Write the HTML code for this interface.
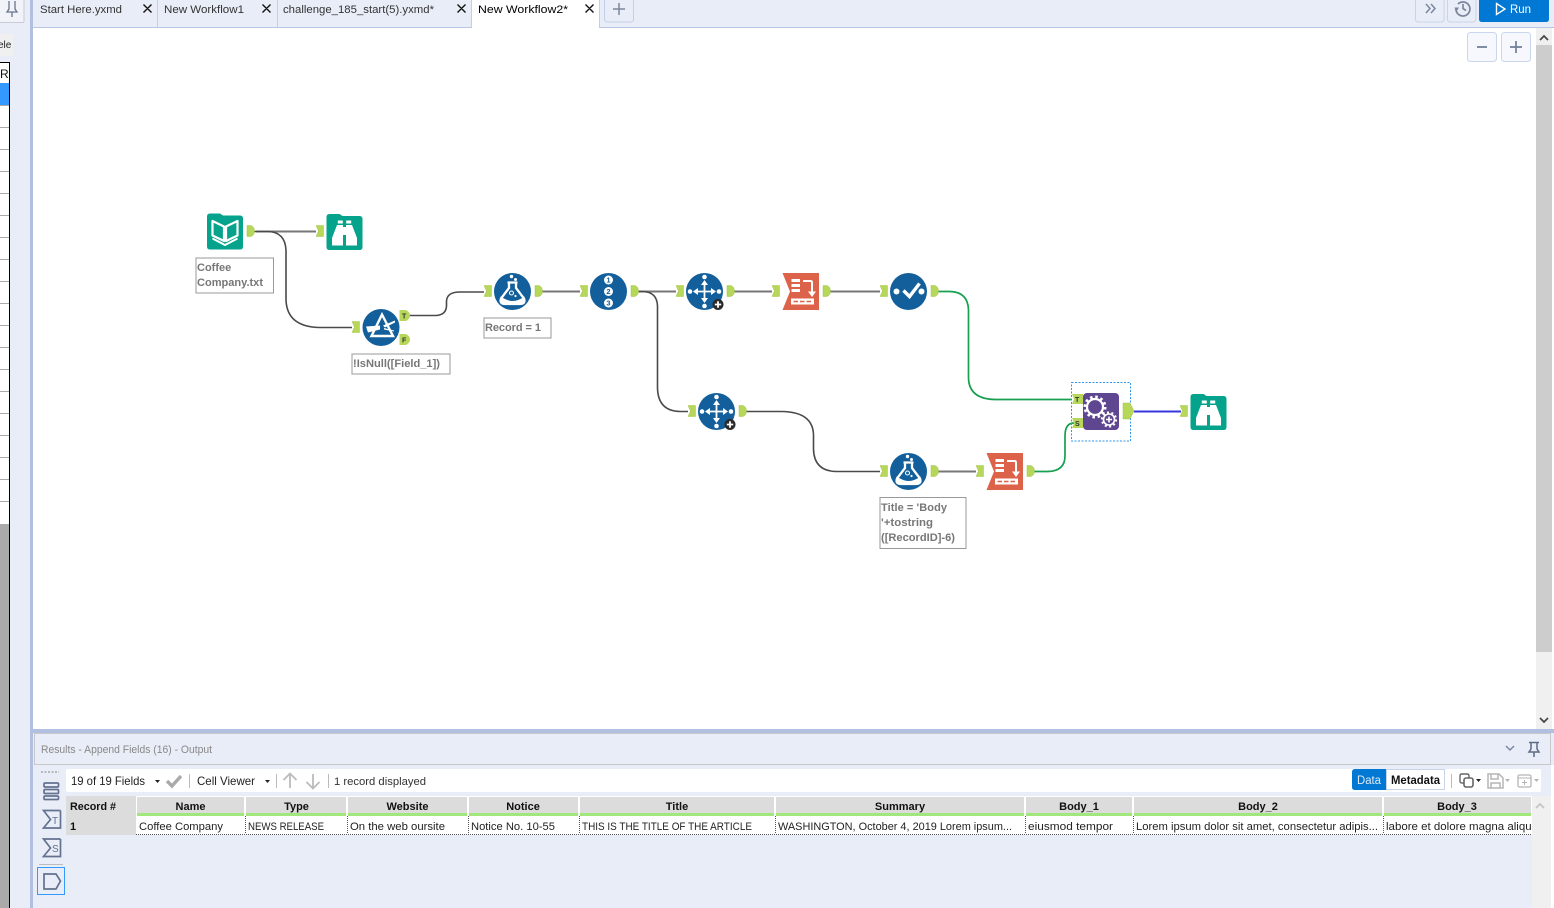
<!DOCTYPE html>
<html lang="en"><head><meta charset="utf-8"><title>Workflow</title>
<style>
html,body{margin:0;padding:0;background:#fff;overflow:hidden}
svg{display:block;font-family:"Liberation Sans",sans-serif}
.t{font-size:11px;fill:#333}
.h{font-size:11px;font-weight:bold;fill:#111;text-anchor:middle}
.c{font-size:11px;fill:#222}
.l{font-size:11px;font-weight:bold;fill:#777}
.s{stroke:#777;stroke-width:2;fill:none}
.w{stroke:#4a4a4a;stroke-width:1.6;fill:none}
.g{stroke:#17a050;stroke-width:1.7;fill:none}
</style></head><body>
<svg width="1554" height="908" viewBox="0 0 1554 908" xmlns="http://www.w3.org/2000/svg">
<defs>
<path id="o" d="M0-5.500H4Q7.500-4 7.500 0Q7.500 4 4 5.500H0Z" fill="#b7d75b" stroke="#a4c44c" stroke-width=".5"/>
<path id="i" d="M0-5.500H7.500V5.500H0L2.500 0Z" fill="#b7d75b" stroke="#a4c44c" stroke-width=".5"/>
<g id="browse">
<path d="M-18-15Q-18-18-15-18H-5L-2-16H15Q18-16 18-13V15Q18 18 15 18H-15Q-18 18-18 15Z" fill="#05a38b"/>
<path d="M-6.700-11.500H-1.700V-8.500H-6.700ZM6.700-11.500H1.700V-8.500H6.700Z" fill="#fff"/>
<path d="M-7.500-7H-1.500V-5H1.500V-7H7.500L12.500 6V13.500H1.500V3H-1.500V13.500H-12.500V6Z" fill="#fff"/>
</g>
<g id="flask">
<circle r="18.500" fill="#135f9b"/>
<circle cx="-1" cy="-15" r="1.700" fill="#fff"/><circle cx="3" cy="-12" r="1.500" fill="#fff"/>
<path d="M-5-9H5M-3.500-9V-3.500L-11.500 7Q-13.500 12.500-7 12.500H7Q13.500 12.500 11.500 7L3.500-3.500V-9" fill="none" stroke="#fff" stroke-width="2.300"/>
<path d="M-12 5Q-5 9.500 0 9.500Q6 9.500 12 5L12.500 10Q10 13.500 6 13.500H-6Q-10 13.500-12.500 10Z" fill="#fff"/>
<circle cx="-1" cy="1.500" r="2" fill="none" stroke="#fff" stroke-width="1.100"/><circle cx="3" cy="4.500" r="1.100" fill="#fff"/>
</g>
<g id="sel">
<circle r="18.500" fill="#135f9b"/>
<circle cy="-14.500" r="2.300" fill="#fff"/><circle cy="14.500" r="2.300" fill="#fff"/><circle cx="-14.500" r="2.300" fill="#fff"/><circle cx="14.500" r="2.300" fill="#fff"/>
<path d="M0-9.500V9.500M-9.500 0H9.500" stroke="#fff" stroke-width="1.800"/>
<path d="M0-11.500L-3.500-6.500H3.500ZM0 11.500L-3.500 6.500H3.500ZM-11.500 0L-6.500-3.500V3.500ZM11.500 0L6.500-3.500V3.500Z" fill="#fff"/>
<circle cx="13.500" cy="13" r="5.500" fill="#2a2a2a"/>
<path d="M13.500 9.800V16.200M10.300 13H16.700" stroke="#fff" stroke-width="1.800"/>
</g>
<g id="orange">
<path d="M-18.500-18.500H18V18.500H-18.500L-11 0Z" fill="#dc6349"/>
<path d="M-9.500-12.500H-1V-9.500H-9.500ZM-9.500-7.500H-1V-4.500H-9.500ZM-9.500-2.500H-1V.5H-9.500Z" fill="#fff"/>
<path d="M2-10.500H9.500Q11-10.500 11-9V1" fill="none" stroke="#fff" stroke-width="2"/>
<path d="M7 0H15L11 5.500Z" fill="#fff"/>
<rect x="-10" y="7" width="23" height="6" fill="#fff"/>
<path d="M-7.500 10H11" stroke="#dc6349" stroke-width="1.600" stroke-dasharray="4.500 2"/>
</g>
</defs>

<rect width="1554" height="908" fill="#e9edf8"/>

<!-- left panel -->
<rect x="0" y="524" width="9" height="384" fill="#aaa"/>
<rect x="0" y="0" width="24" height="22" fill="#f1f3f9"/>
<path d="M0 22.500H24M24 0V22" stroke="#c8ccd4"/>
<path d="M9 1V9L7 12H17L15 9V1M12 12V17" fill="none" stroke="#68738a" stroke-width="1.300"/>
<rect x="0" y="34" width="13" height="22" fill="#f0f0f0"/>
<text x="-2" y="48" font-size="10" fill="#222">ele</text>
<rect x="0" y="62" width="9" height="462" fill="#fff"/>
<rect x="0" y="83" width="9" height="22" fill="#3399ff"/>
<text x="0" y="78" font-size="12" fill="#111">R</text>
<path d="M0 105.500H9M0 127.500H9M0 149.500H9M0 171.500H9M0 193.500H9M0 215.500H9M0 237.500H9M0 259.500H9M0 281.500H9M0 303.500H9M0 325.500H9M0 347.500H9M0 369.500H9M0 391.500H9M0 413.500H9M0 435.500H9M0 457.500H9M0 479.500H9M0 501.500H9" stroke="#aaa"/>
<path d="M0 62.500H10M9.500 62V908" stroke="#000"/>
<rect x="30" y="0" width="3" height="908" fill="#b1c0e0"/>

<!-- tabs -->
<rect x="33" y="27" width="1521" height="1" fill="#b9c7e4"/>
<path d="M157.500 0V27M277.500 0V27M471.500 0V27M599.500 0V27" stroke="#c3cfe8"/>
<rect x="472" y="0" width="127" height="28" fill="#fff"/>
<text class="t" x="40" y="13" textLength="82" lengthAdjust="spacingAndGlyphs">Start Here.yxmd</text>
<text class="t" x="164" y="13" textLength="80" lengthAdjust="spacingAndGlyphs">New Workflow1</text>
<text class="t" x="283" y="13" textLength="151" lengthAdjust="spacingAndGlyphs">challenge_185_start(5).yxmd*</text>
<text class="t" x="478" y="13" textLength="90" lengthAdjust="spacingAndGlyphs" style="fill:#000">New Workflow2*</text>
<path d="M143.500 4.500L151.500 12.500M151.500 4.500L143.500 12.500M262.500 4.500L270.500 12.500M270.500 4.500L262.500 12.500M457.500 4.500L465.500 12.500M465.500 4.500L457.500 12.500M585.500 4.500L593.500 12.500M593.500 4.500L585.500 12.500" stroke="#111" stroke-width="1.400"/>
<path d="M604.500 0V19Q604.500 22 607.500 22H630.500Q633.500 22 633.500 19V0" fill="#e9edf8" stroke="#c3cfe8"/>
<path d="M619 3V15M613 9H625" stroke="#7b869c" stroke-width="1.500"/>

<!-- top right -->
<path d="M1415.500 0V19Q1415.500 22 1418.500 22H1441Q1444 22 1444 19V0M1447.500 0V19Q1447.500 22 1450.500 22H1473Q1476 22 1476 19V0" fill="#e9edf8" stroke="#c9d3e8"/>
<path d="M1426 4L1430 8.500L1426 13M1431 4L1435 8.500L1431 13" fill="none" stroke="#7b869c" stroke-width="1.500"/>
<path d="M1458 4A7 7 0 1 1 1456 10M1463 4V8.500L1466 10.500" fill="none" stroke="#7b869c" stroke-width="1.700"/>
<path d="M1454.500 7.500H1459L1456 12.500Z" fill="#7b869c"/>
<path d="M1479 0H1549V19Q1549 22 1546 22H1482Q1479 22 1479 19Z" fill="#0078d4"/>
<path d="M1496.500 3.500L1505 9L1496.500 14.500Z" fill="none" stroke="#fff" stroke-width="1.400"/>
<text x="1510" y="13" font-size="12" fill="#fff" textLength="21" lengthAdjust="spacingAndGlyphs">Run</text>

<!-- canvas -->
<rect x="33" y="28" width="1503" height="701" fill="#fff"/>
<rect x="1536" y="28" width="16" height="701" fill="#f0f0f0"/>
<rect x="1536" y="45" width="16" height="607" fill="#cdcdcd"/>
<rect x="1552" y="28" width="2" height="701" fill="#fff"/>
<path d="M1540 40L1544 36L1548 40M1540 718L1544 722L1548 718" fill="none" stroke="#444" stroke-width="1.700"/>
<rect x="1467.500" y="32.500" width="29" height="29" rx="3" fill="#f6f8fd" stroke="#c9d6ee"/>
<rect x="1501.500" y="32.500" width="29" height="29" rx="3" fill="#f6f8fd" stroke="#c9d6ee"/>
<path d="M1477 47H1487M1510 47H1522M1516 41V53" stroke="#6f7d96" stroke-width="1.700"/>

<!-- connectors -->
<path class="s" d="M256 231.500H316"/>
<path class="w" d="M254 231.500H268Q285 232 286 250V300Q287 327 320 327.500H352"/>
<path class="w" d="M409 315.500H436Q446 315 446.500 306V301Q447 292 460 292H484"/>
<path class="s" d="M542 291.500H580M638 291.500H676M734 291.500H772M830 291.500H880M938 471.500H976"/>
<path class="w" d="M638 291.500H643Q657 292 657.500 306V388Q658 411 680 411.500H688"/>
<path class="w" d="M746 411.500H782Q813 412 813.500 435V449Q814 471 836 471.500H880"/>
<path class="g" d="M938 291.500H950Q968 292 968.500 310V378Q969 399 995 399.500H1072"/>
<path class="g" d="M1034 471.500H1048Q1065 471 1065 456V436Q1065 423 1074 423"/>
<path d="M1134 411.500H1181" stroke="#3535dd" stroke-width="2" fill="none"/>

<!-- selection -->
<rect x="1071.500" y="382.500" width="59" height="58.500" fill="none" stroke="#2f96ee" stroke-dasharray="2 1.500"/>

<!-- anchors -->
<use href="#o" x="247" y="231"/><use href="#i" x="316" y="231"/>
<use href="#i" x="352" y="327"/>
<use href="#i" x="484" y="291"/><use href="#o" x="535" y="291"/>
<use href="#i" x="580" y="291"/><use href="#o" x="631" y="291"/>
<use href="#i" x="676" y="291"/><use href="#o" x="727" y="291"/>
<use href="#i" x="772" y="291"/><use href="#o" x="823" y="291"/>
<use href="#i" x="880" y="291"/><use href="#o" x="931" y="291"/>
<use href="#i" x="688" y="411"/><use href="#o" x="739" y="411"/>
<use href="#i" x="880" y="471"/><use href="#o" x="931" y="471"/>
<use href="#i" x="976" y="471"/><use href="#o" x="1027" y="471"/>
<use href="#i" x="1180" y="411"/>
<path d="M399.500 310H406Q410 312 410 315.500Q410 319 406 321H399.500Z" fill="#b7d75b"/>
<path d="M399.500 334H406Q410 336 410 339.500Q410 343 406 345H399.500Z" fill="#b7d75b"/>
<text x="402" y="318.500" font-size="7" font-weight="bold" fill="#333">T</text>
<text x="402" y="342.500" font-size="7" font-weight="bold" fill="#333">F</text>
<path d="M1072 394H1083V404H1072L1074 399Z" fill="#b7d75b"/>
<path d="M1072 418H1083V428H1072L1074 423Z" fill="#b7d75b"/>
<text x="1075" y="402" font-size="7" font-weight="bold" fill="#333">T</text>
<text x="1075" y="426" font-size="7" font-weight="bold" fill="#333">S</text>
<path d="M1123 403H1130L1134 411L1130 419H1123Z" fill="#b7d75b" stroke="#a4c44c" stroke-width=".5"/>

<!-- input tool -->
<g transform="translate(225 231.500)">
<path d="M-18-15Q-18-18-15-18H-5L-2-16H15Q18-16 18-13V15Q18 18 15 18H-15Q-18 18-18 15Z" fill="#05a38b"/>
<path d="M-1-5L-12.500-10.500V4L-1 9.500ZM1-5L12.500-10.500V4L1 9.500Z" fill="#05a38b" stroke="#fff" stroke-width="2.200" stroke-linejoin="round"/>
<path d="M-12.500 7L0 13.500L12.500 7" fill="none" stroke="#fff" stroke-width="2"/>
</g>
<use href="#browse" x="344.500" y="232"/>
<use href="#browse" x="1208.500" y="412"/>

<!-- filter -->
<g transform="translate(381 327.500)">
<circle r="18.500" fill="#135f9b"/>
<path d="M1-13L-9.500 8.500H12Z" fill="none" stroke="#fff" stroke-width="2.400"/>
<path d="M-15-1L-1-2V2L-13 5Z" fill="#fff"/>
<path d="M2-2L14-7V-5L4 0ZM3 0.500L13 3V4L3 2Z" fill="#fff"/>
</g>

<use href="#flask" x="512.500" y="291.500"/>
<use href="#flask" x="908.500" y="471.500"/>

<!-- record id -->
<g transform="translate(608.500 291.500)">
<circle r="18.500" fill="#135f9b"/>
<circle cy="-11.500" r="4.500" fill="#fff"/><circle r="4.500" fill="#fff"/><circle cy="11.500" r="4.500" fill="#fff"/>
<g font-size="7.500" font-weight="bold" fill="#135f9b" text-anchor="middle">
<text y="-8.800">1</text><text y="2.700">2</text><text y="14.200">3</text></g>
</g>

<use href="#sel" x="704.500" y="291.500"/>
<use href="#sel" x="716.500" y="411.500"/>
<use href="#orange" x="801" y="291.500"/>
<use href="#orange" x="1005" y="471.500"/>

<!-- check -->
<g transform="translate(908.500 291.500)">
<circle r="18.500" fill="#135f9b"/>
<circle cx="-12" cy="0" r="3" fill="#fff"/><circle cx="13" cy="0" r="3" fill="#fff"/>
<path d="M-5-1L1 5L11-8" fill="none" stroke="#fff" stroke-width="3.400"/>
</g>

<!-- purple -->
<g transform="translate(1101 411.500)">
<rect x="-18" y="-18.500" width="36" height="37" rx="4" fill="#5f4690"/>
<circle cx="-6" cy="-4.500" r="8" fill="none" stroke="#fff" stroke-width="2.200"/>
<circle cx="-6" cy="-4.500" r="10" fill="none" stroke="#fff" stroke-width="3" stroke-dasharray="2.500 2.730"/>
<circle cx="8" cy="8" r="5.500" fill="#5f4690" stroke="#fff" stroke-width="1.600"/>
<circle cx="8" cy="8" r="7" fill="none" stroke="#fff" stroke-width="2.200" stroke-dasharray="2 2.400"/>
<path d="M8 5V11M5 8H11" stroke="#fff" stroke-width="1.600"/>
</g>

<!-- annotations -->
<g fill="#fff" stroke="#999">
<rect x="196" y="258" width="77.500" height="35"/>
<rect x="484" y="318" width="67" height="20"/>
<rect x="352" y="354" width="98" height="20"/>
<rect x="880" y="497.500" width="86" height="51"/>
</g>
<text class="l" x="197" y="271">Coffee</text>
<text class="l" x="197" y="286" textLength="66" lengthAdjust="spacingAndGlyphs">Company.txt</text>
<text class="l" x="485" y="331" textLength="56" lengthAdjust="spacing">Record = 1</text>
<text class="l" x="353" y="367" textLength="87" lengthAdjust="spacingAndGlyphs">!IsNull([Field_1])</text>
<text class="l" x="881" y="511" textLength="66" lengthAdjust="spacing">Title = 'Body</text>
<text class="l" x="881" y="526" textLength="52" lengthAdjust="spacingAndGlyphs">'+tostring</text>
<text class="l" x="881" y="541" textLength="74" lengthAdjust="spacingAndGlyphs">([RecordID]-6)</text>

<!-- results panel -->
<rect x="33" y="729" width="1521" height="4" fill="#b1c0e0"/>
<rect x="34.500" y="733.500" width="1516" height="31" fill="#e9edf8" stroke="#c8c8cc"/>
<text x="41" y="753" font-size="11" fill="#888" textLength="171" lengthAdjust="spacingAndGlyphs">Results - Append Fields (16) - Output</text>
<path d="M1506 746L1510 750L1514 746" fill="none" stroke="#7a88a6" stroke-width="1.500"/>
<path d="M1529 742.500H1539M1531 742.500V749L1529 752H1539L1537 749V742.500M1534 752V757" fill="none" stroke="#5d6b85" stroke-width="1.500"/>

<!-- toolbar -->
<rect x="66" y="769" width="1475" height="23" rx="2" fill="#fff"/>
<text x="71" y="785" font-size="12" fill="#222" textLength="74" lengthAdjust="spacingAndGlyphs">19 of 19 Fields</text>
<path d="M155 780H160L157.500 783Z" fill="#222"/>
<path d="M167 781L172 786L181 776" fill="none" stroke="#aaa" stroke-width="3.400"/>
<path d="M189.500 774V788M276.500 774V788M328.500 774V788" stroke="#bbb"/>
<text x="197" y="785" font-size="12" fill="#222" textLength="58" lengthAdjust="spacingAndGlyphs">Cell Viewer</text>
<path d="M265 780H270L267.500 783Z" fill="#222"/>
<path d="M290 788V774M283.500 780L290 773.500L296.500 780M313 774V788M306.500 782L313 788.500L319.500 782" fill="none" stroke="#bbb" stroke-width="1.800"/>
<text x="334" y="785" font-size="11" fill="#333" textLength="92" lengthAdjust="spacingAndGlyphs">1 record displayed</text>
<path d="M1355 769H1386V790H1355Q1352 790 1352 787V772Q1352 769 1355 769Z" fill="#0078d4"/>
<text x="1357" y="784" font-size="11.500" fill="#dfeaf6" textLength="24" lengthAdjust="spacingAndGlyphs">Data</text>
<rect x="1386.500" y="769.500" width="58" height="20" fill="#fff" stroke="#c8d4e8"/>
<text x="1391" y="784" font-size="11.500" font-weight="bold" fill="#111" textLength="49" lengthAdjust="spacingAndGlyphs">Metadata</text>
<path d="M1451.500 774V788" stroke="#bbb"/>
<rect x="1464" y="778" width="9" height="9" rx="2" fill="none" stroke="#666" stroke-width="1.600"/>
<path d="M1464 783H1462Q1460 783 1460 781V776Q1460 774 1462 774H1467Q1469 774 1469 776V778" fill="none" stroke="#666" stroke-width="1.400"/>
<path d="M1476 779H1481L1478.500 782Z" fill="#222"/>
<path d="M1488 774H1499L1503 778V788H1488ZM1491 774V779H1498V774M1491 788V783H1500V788" fill="none" stroke="#b5b5b5" stroke-width="1.500"/>
<path d="M1505 779H1510L1507.500 782Z" fill="#b5b5b5"/>
<rect x="1518" y="775" width="13" height="12" rx="1.500" fill="none" stroke="#b5b5b5" stroke-width="1.300"/>
<path d="M1518 778H1531M1524.500 780V785M1522 782.500H1527" stroke="#b5b5b5"/>
<path d="M1534 779H1539L1536.500 782Z" fill="#b5b5b5"/>

<!-- gutter -->
<path d="M41 772H59" stroke="#999" stroke-dasharray="2 1.500" stroke-width="1.300"/>
<g fill="none" stroke="#63728f" stroke-width="1.700">
<rect x="44" y="783" width="14.500" height="4" rx="1"/><rect x="44" y="789.500" width="14.500" height="4" rx="1"/><rect x="44" y="796" width="14.500" height="3.500" rx="1"/>
<path d="M60.500 810.500H43.500L50.500 819.500L43.500 828H60.500V810.500"/>
<path d="M60.500 839H43.500L50.500 848L43.500 856.500H60.500V839"/>
<path d="M44 874H56L60.500 881L56 889H44Z"/>
</g>
<text x="52" y="824" font-size="10" fill="#63728f">T</text>
<text x="52" y="852" font-size="10" fill="#63728f">S</text>
<path d="M39 864.500H63" stroke="#bbb"/>
<rect x="37.500" y="867.500" width="27" height="27" fill="none" stroke="#3399ff"/>

<!-- table -->
<rect x="66" y="796" width="70" height="39" fill="#dcdcdc"/>
<text x="70" y="810" font-size="11" font-weight="bold" fill="#111" textLength="46" lengthAdjust="spacingAndGlyphs">Record #</text>
<text x="70" y="830" font-size="11" font-weight="bold" fill="#111">1</text>
<rect x="136" y="796" width="1396" height="39" fill="#fff"/>
<g fill="#dcdcdc">
<rect x="137" y="797" width="107" height="16"/><rect x="246" y="797" width="100" height="16"/><rect x="348" y="797" width="119" height="16"/><rect x="469" y="797" width="109" height="16"/><rect x="580" y="797" width="194" height="16"/><rect x="776" y="797" width="248" height="16"/><rect x="1026" y="797" width="106" height="16"/><rect x="1134" y="797" width="248" height="16"/><rect x="1384" y="797" width="147" height="16"/>
</g>
<g fill="#a2e77c">
<rect x="137" y="813" width="107" height="3"/><rect x="246" y="813" width="100" height="3"/><rect x="348" y="813" width="119" height="3"/><rect x="469" y="813" width="109" height="3"/><rect x="580" y="813" width="194" height="3"/><rect x="776" y="813" width="248" height="3"/><rect x="1026" y="813" width="106" height="3"/><rect x="1134" y="813" width="248" height="3"/><rect x="1384" y="813" width="147" height="3"/>
</g>
<text class="h" x="190.500" y="810">Name</text>
<text class="h" x="296.500" y="810">Type</text>
<text class="h" x="407.500" y="810">Website</text>
<text class="h" x="523" y="810">Notice</text>
<text class="h" x="677" y="810">Title</text>
<text class="h" x="900" y="810">Summary</text>
<text class="h" x="1079" y="810">Body_1</text>
<text class="h" x="1258" y="810">Body_2</text>
<text class="h" x="1457" y="810">Body_3</text>
<text class="c" x="139" y="830" textLength="84" lengthAdjust="spacingAndGlyphs">Coffee Company</text>
<text class="c" x="248" y="830" textLength="76" lengthAdjust="spacingAndGlyphs">NEWS RELEASE</text>
<text class="c" x="350" y="830" textLength="95" lengthAdjust="spacingAndGlyphs">On the web oursite</text>
<text class="c" x="471" y="830" textLength="84" lengthAdjust="spacingAndGlyphs">Notice No. 10-55</text>
<text class="c" x="582" y="830" textLength="170" lengthAdjust="spacingAndGlyphs">THIS IS THE TITLE OF THE ARTICLE</text>
<text class="c" x="778" y="830" textLength="234" lengthAdjust="spacingAndGlyphs">WASHINGTON, October 4, 2019 Lorem ipsum...</text>
<text class="c" x="1028" y="830" textLength="85" lengthAdjust="spacingAndGlyphs">eiusmod tempor</text>
<text class="c" x="1136" y="830" textLength="242" lengthAdjust="spacingAndGlyphs">Lorem ipsum dolor sit amet, consectetur adipis...</text>
<svg x="1384" y="816" width="147" height="18"><text class="c" x="2" y="14" textLength="152" lengthAdjust="spacingAndGlyphs">labore et dolore magna aliqua</text></svg>
<path d="M136 834.500H1532M245.500 816V834M347.500 816V834M468.500 816V834M579.500 816V834M775.500 816V834M1025.500 816V834M1133.500 816V834M1383.500 816V834" stroke="#555" stroke-dasharray="1 1" fill="none"/>
<rect x="1532" y="796" width="19" height="112" fill="#f0f0f0"/>
<rect x="1551" y="765" width="3" height="143" fill="#fff"/>
<path d="M1536 808L1540 804L1544 808" fill="none" stroke="#c5c5c5" stroke-width="1.700"/>
</svg>
</body></html>
